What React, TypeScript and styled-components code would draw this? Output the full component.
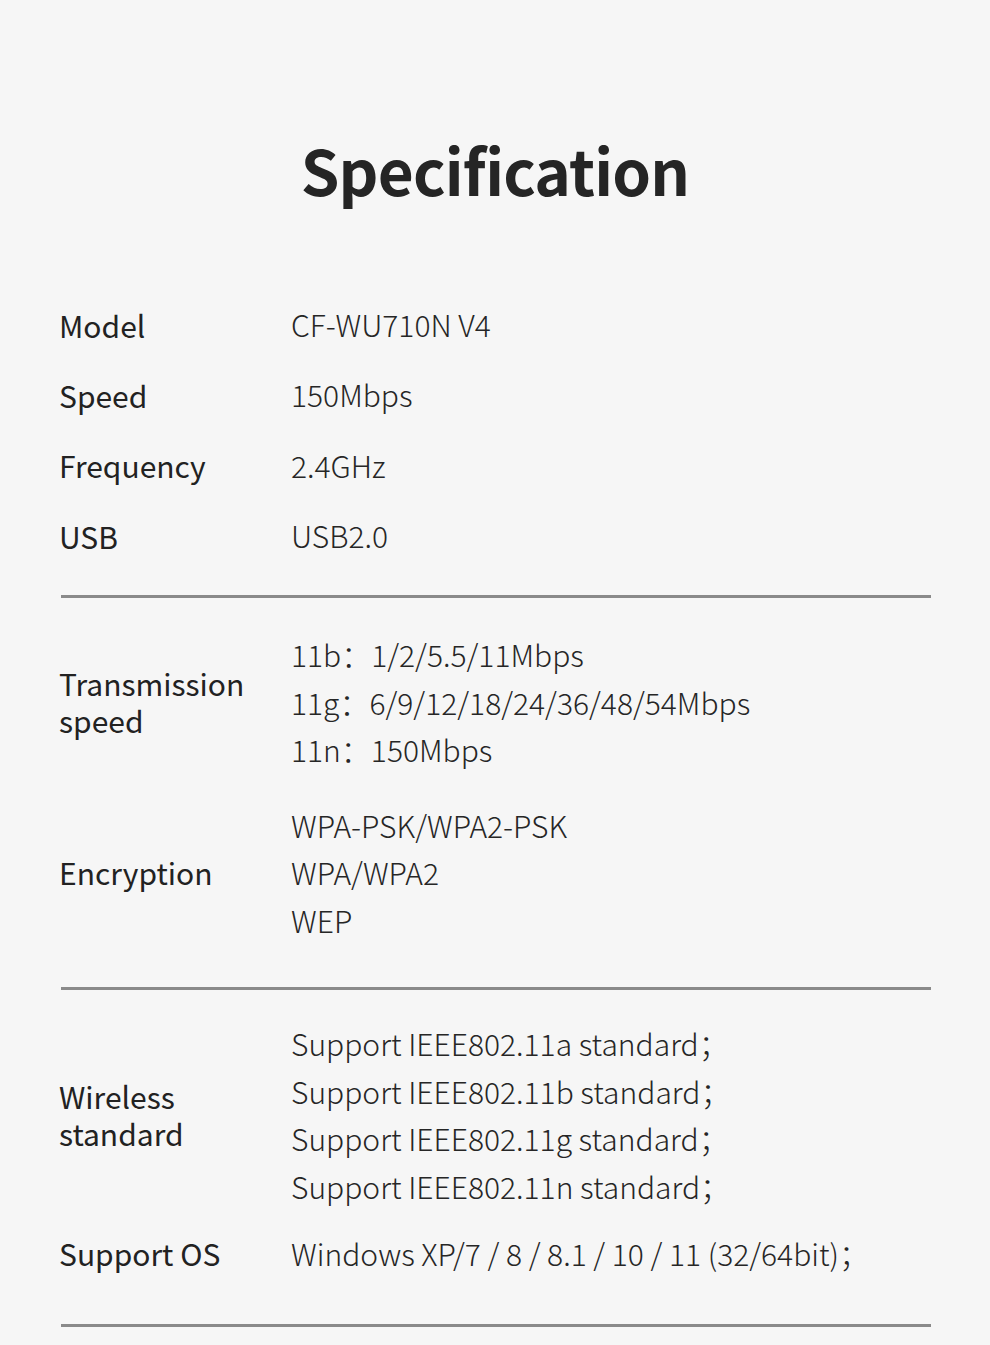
import React from "react";
import styled, { createGlobalStyle } from "styled-components";

const Global = createGlobalStyle`
  html, body { margin: 0; padding: 0; background: #f6f6f6; }
  body { font-family: "Noto Sans CJK SC", "Noto Sans", sans-serif; color: #222; }
`;

const Page = styled.div`
  width: 990px;
  height: 1345px;
  box-sizing: border-box;
  padding: 0 59px 0 59px;
  background: #f6f6f6;
`;

const Title = styled.h1`
  margin: 0;
  padding-top: 127px;
  height: 290px;
  box-sizing: border-box;
  text-align: center;
  font-size: 62px;
  line-height: 84px;
  font-weight: 700;
  letter-spacing: -0.8px;
  color: #252525;
`;

const Section = styled.section<{ $pt: number; $pb: number }>`
  display: flex;
  flex-direction: column;
  padding: ${(p) => p.$pt}px 0 ${(p) => p.$pb}px 0;
  border-bottom: 3px solid #8a8a8a;
  margin-left: 2px;
`;

const Row = styled.div<{ $h?: number }>`
  display: grid;
  grid-template-columns: 230px 1fr;
  align-items: center;
  min-height: ${(p) => p.$h ?? 0}px;
`;

const Label = styled.div`
  font-size: 30px;
  line-height: 37px;
  font-weight: 400;
  color: #222;
  margin-left: -2px;
`;

const Values = styled.div`
  display: flex;
  flex-direction: column;
`;

const Value = styled.div`
  font-size: 30px;
  line-height: 47.5px;
  font-weight: 300;
  color: #262626;
  white-space: nowrap;
`;

const Gap = styled.div<{ $h: number }>`
  height: ${(p) => p.$h}px;
`;

export default function App() {
  return (
    <>
      <Global />
      <Page>
        <Title>Specification</Title>
        <Section $pt={0} $pb={24}>
          <Row $h={70}><Label>Model</Label><Value>CF-WU710N V4</Value></Row>
          <Row $h={70}><Label>Speed</Label><Value>150Mbps</Value></Row>
          <Row $h={71}><Label>Frequency</Label><Value>2.4GHz</Value></Row>
          <Row $h={70}><Label>USB</Label><Value>USB2.0</Value></Row>
        </Section>
        <Section $pt={33} $pb={43}>
          <Row>
            <Label>Transmission<br />speed</Label>
            <Values>
              <Value>11b：1/2/5.5/11Mbps</Value>
              <Value>11g：6/9/12/18/24/36/48/54Mbps</Value>
              <Value>11n：150Mbps</Value>
            </Values>
          </Row>
          <Gap $h={28} />
          <Row>
            <Label>Encryption</Label>
            <Values>
              <Value>WPA-PSK/WPA2-PSK</Value>
              <Value>WPA/WPA2</Value>
              <Value>WEP</Value>
            </Values>
          </Row>
        </Section>
        <Section $pt={30} $pb={46}>
          <Row>
            <Label>Wireless<br />standard</Label>
            <Values>
              <Value>Support IEEE802.11a standard；</Value>
              <Value>Support IEEE802.11b standard；</Value>
              <Value>Support IEEE802.11g standard；</Value>
              <Value>Support IEEE802.11n standard；</Value>
            </Values>
          </Row>
          <Gap $h={20} />
          <Row>
            <Label>Support OS</Label>
            <Values>
              <Value>Windows XP/7 / 8 / 8.1 / 10 / 11 (32/64bit)；</Value>
            </Values>
          </Row>
        </Section>
      </Page>
    </>
  );
}
